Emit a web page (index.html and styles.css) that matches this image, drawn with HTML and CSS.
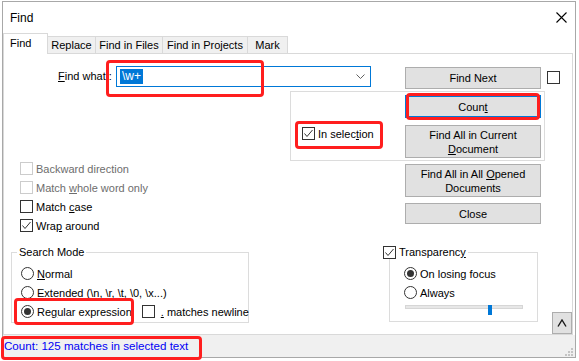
FILE: index.html
```html
<!DOCTYPE html>
<html lang="en">
<head>
  <meta charset="UTF-8" />
  <meta name="viewport" content="width=device-width, initial-scale=1.0"/>
  <title>Find</title>
  <link rel="stylesheet" href="styles.css">
</head>
<body>
  <div class="window">
    <div class="titlebar">
      <span class="title">Find</span>
      <svg class="close-x" width="11" height="11" viewBox="0 0 11 11">
        <path d="M0.5 0.5 L10.5 10.5 M10.5 0.5 L0.5 10.5" stroke="#000" stroke-width="1.1" fill="none"/>
      </svg>
    </div>

    <div class="tabs">
      <div class="tab active">Find</div>
      <div class="tab tab-replace">Replace</div>
      <div class="tab tab-files">Find in Files</div>
      <div class="tab tab-projects">Find in Projects</div>
      <div class="tab tab-mark">Mark</div>
    </div>

    <div class="panel">
      <div class="find-row">
        <label class="find-label"><u>F</u>ind what :</label>
        <div class="combo">
          <span class="sel">\w+</span>
          <svg width="9" height="5" viewBox="0 0 9 5">
            <polyline points="0.5,0.5 4.5,4.5 8.5,0.5" stroke="#606060" stroke-width="1" fill="none"/>
          </svg>
        </div>
        <div class="btn find-next"><span>Find Next</span></div>
        <span class="cb extra-check"></span>
      </div>

      <div class="mid">
        <div class="options">
          <div class="check-row disabled"><span class="cb"></span><span>Backward direction</span></div>
          <div class="check-row disabled"><span class="cb"></span><span>Match <u>w</u>hole word only</span></div>
          <div class="check-row"><span class="cb"></span><span>Match <u>c</u>ase</span></div>
          <div class="check-row"><span class="cb checked"><svg width="11" height="11" viewBox="0 0 11 11"><polyline points="1.5,5.5 4,8.5 9.5,2" stroke="#333" stroke-width="1" fill="none"/></svg></span><span>Wra<u>p</u> around</span></div>
        </div>

        <div class="actions">
          <div class="selbox">
            <div class="sel-check">
              <div class="check-row"><span class="cb checked"><svg width="11" height="11" viewBox="0 0 11 11"><polyline points="1.5,5.5 4,8.5 9.5,2" stroke="#333" stroke-width="1" fill="none"/></svg></span><span>In selec<u>t</u>ion</span></div>
            </div>
            <div class="sel-buttons">
              <div class="btn count"><span>Coun<u>t</u></span></div>
              <div class="btn tall"><span>Find All in Current<br><u>D</u>ocument</span></div>
            </div>
          </div>
          <div class="btn tall find-opened"><span>Find All in All <u>O</u>pened<br>Documents</span></div>
          <div class="btn close-btn"><span>Close</span></div>
        </div>
      </div>

      <div class="bottom">
        <fieldset class="group mode">
          <legend>Search Mode</legend>
          <div class="group-body">
            <div class="radio-row"><span class="rb"></span><span><u>N</u>ormal</span></div>
            <div class="radio-row"><span class="rb"></span><span>E<u>x</u>tended (\n, \r, \t, \0, \x...)</span></div>
            <div class="radio-row"><span class="rb on"></span><span>Re<u>g</u>ular expression</span><span class="cb newline-check"></span><span><u>.</u>&nbsp;matches newline</span></div>
          </div>
        </fieldset>

        <fieldset class="group transp">
          <legend><span class="cb checked"><svg width="11" height="11" viewBox="0 0 11 11"><polyline points="1.5,5.5 4,8.5 9.5,2" stroke="#333" stroke-width="1" fill="none"/></svg></span><span>Transparenc<u>y</u></span></legend>
          <div class="group-body">
            <div class="radio-row"><span class="rb on"></span><span>On losing focus</span></div>
            <div class="radio-row"><span class="rb"></span><span>Always</span></div>
            <div class="slider">
              <div class="track"></div>
              <div class="thumb"></div>
            </div>
          </div>
        </fieldset>

        <div class="btn collapse">
          <svg width="10" height="8" viewBox="0 0 10 8">
            <polyline points="1,7.5 5,1 9,7.5" stroke="#1a1a1a" stroke-width="1.4" fill="none"/>
          </svg>
        </div>
      </div>
    </div>

    <div class="status">
      <span class="status-text">Count: 125 matches in selected text</span>
      <svg class="grip" width="9" height="9" viewBox="0 0 9 9">
        <rect x="6" y="0" width="2" height="2" fill="#c4c4c4"/>
        <rect x="3" y="3" width="2" height="2" fill="#c4c4c4"/>
        <rect x="6" y="3" width="2" height="2" fill="#c4c4c4"/>
        <rect x="0" y="6" width="2" height="2" fill="#c4c4c4"/>
        <rect x="3" y="6" width="2" height="2" fill="#c4c4c4"/>
        <rect x="6" y="6" width="2" height="2" fill="#c4c4c4"/>
      </svg>
    </div>
  </div>

  <!-- red annotation boxes drawn over the dialog -->
  <div class="mark mark-combo"></div>
  <div class="mark mark-count"></div>
  <div class="mark mark-selection"></div>
  <div class="mark mark-regex"></div>
  <div class="mark mark-status"></div>
</body>
</html>
```

FILE: styles.css
```css
* {
  box-sizing: border-box;
}

body {
  margin: 0;
  width: 579px;
  height: 361px;
  overflow: hidden;
  position: relative;
  font-family: "Liberation Sans", Arial, sans-serif;
  font-size: 11px;
  color: #000;
  background: #fff;
}

u {
  text-decoration: underline;
  text-underline-offset: 1px;
}

.window {
  margin: 1px 0 0 2px;
  width: 574px;
  height: 357px;
  border: 1px solid #a8a8a8;
  background: #fff;
  display: flex;
  flex-direction: column;
}

.titlebar {
  height: 31px;
  display: flex;
  align-items: center;
  justify-content: space-between;
  padding: 0 8px 0 7px;
}

.title {
  font-size: 12px;
}

/* tabs */
.tabs {
  height: 20px;
  display: flex;
  align-items: flex-end;
}

.tab {
  height: 17px;
  border: 1px solid #d9d9d9;
  border-bottom: none;
  border-left: none;
  background: #f0f0f0;
  text-align: center;
  line-height: 16px;
}

.tab.active {
  position: relative;
  width: 45px;
  height: 21px;
  margin-bottom: -1px;
  border-left: 1px solid #d9d9d9;
  background: #fff;
  text-align: left;
  padding-left: 6px;
  line-height: 19px;
}

.tab-replace { width: 48px; }
.tab-files { width: 67px; }
.tab-projects { width: 85px; }
.tab-mark { width: 40px; }

.panel {
  width: 570px;
  height: 282px;
  border: 1px solid #d9d9d9;
}

/* common controls */
.btn {
  width: 136px;
  background: #e1e1e1;
  border: 1px solid #adadad;
  display: flex;
  align-items: center;
  justify-content: center;
  text-align: center;
  line-height: 14px;
}

.cb {
  width: 13px;
  height: 13px;
  border: 1px solid #333;
  background: #fff;
  flex-shrink: 0;
  display: flex;
  align-items: center;
  justify-content: center;
}

.rb {
  width: 13px;
  height: 13px;
  border: 1px solid #333;
  border-radius: 50%;
  background: #fff;
  flex-shrink: 0;
  display: flex;
  align-items: center;
  justify-content: center;
  margin-right: 3px;
}

.rb.on::after {
  content: "";
  width: 7px;
  height: 7px;
  border-radius: 50%;
  background: #333;
}

.check-row {
  height: 13px;
  display: flex;
  align-items: center;
  gap: 3px;
  white-space: nowrap;
}

.check-row.disabled {
  color: #6d6d6d;
}

.check-row.disabled .cb {
  border-color: #cccccc;
}

/* find row */
.find-row {
  margin-top: 12px;
  height: 22px;
  display: flex;
  align-items: flex-start;
}

.find-label {
  margin-left: 54px;
  width: 58px;
  line-height: 21px;
}

.combo {
  width: 255px;
  height: 21px;
  border: 1px solid #0078d7;
  display: flex;
  align-items: center;
  justify-content: space-between;
  padding: 0 5px 0 3px;
}

.combo .sel {
  background: #0078d7;
  color: #fff;
  padding: 0 2px;
  line-height: 15px;
  font-size: 12px;
}

.find-next {
  margin-left: 34px;
  margin-top: 1px;
  height: 22px;
}

.extra-check {
  margin-left: 6px;
  margin-top: 5px;
}

/* middle area */
.mid {
  margin-top: 3px;
  display: flex;
}

.options {
  width: 286px;
  padding: 71px 0 0 16px;
  display: flex;
  flex-direction: column;
  gap: 6px;
}

.actions {
  display: flex;
  flex-direction: column;
}

.selbox {
  width: 255px;
  height: 70px;
  border: 1px solid #dcdcdc;
  display: flex;
}

.sel-check {
  width: 114px;
  padding: 35px 0 0 11px;
}

.sel-buttons {
  padding-top: 3px;
  display: flex;
  flex-direction: column;
  gap: 7px;
}

.count {
  height: 23px;
  border: 2px solid #0078d7;
}

.tall {
  height: 33px;
}

.find-opened {
  margin: 3px 0 0 115px;
}

.close-btn {
  margin: 6px 0 0 115px;
  height: 21px;
}

/* bottom groups */
.bottom {
  margin-top: 13px;
  display: flex;
  align-items: flex-start;
}

.group {
  margin: 0;
  padding: 0 0 1px 0;
  border: 1px solid #dcdcdc;
  min-width: 0;
}

.group legend {
  padding: 0 2px;
  line-height: 14px;
  height: 14px;
}

.group-body {
  padding-top: 5px;
}

.radio-row {
  height: 19px;
  display: flex;
  align-items: center;
  white-space: nowrap;
}

.mode {
  margin-left: 7px;
  width: 238px;
}

.mode legend {
  margin-left: 5px;
}

.mode .group-body {
  padding-left: 9px;
}

.newline-check {
  margin: 0 6px 0 10px;
}

.transp {
  margin-left: 140px;
  width: 149px;
  padding-bottom: 6px;
}

.transp legend {
  margin-left: -7px;
  padding: 0 2px 0 0;
  display: flex;
  align-items: center;
  gap: 3px;
}

.transp .group-body {
  padding-left: 14px;
}

.slider {
  position: relative;
  margin: 3px 0 0 1px;
  width: 118px;
  height: 10px;
}

.track {
  margin-top: 2px;
  height: 4px;
  background: #e7e7e7;
  border: 1px solid #d6d6d6;
}

.thumb {
  position: absolute;
  left: 83px;
  top: 0;
  width: 4px;
  height: 10px;
  background: #0078d7;
}

.collapse {
  margin: 67px 0 0 14px;
  width: 20px;
  height: 22px;
}

/* status bar */
.status {
  flex: 1;
  background: #f0f0f0;
  display: flex;
  padding-left: 1px;
}

.status-text {
  color: #0000f5;
  font-size: 11.6px;
  line-height: 22px;
}

.grip {
  margin: auto 1px 0 auto;
}

/* red annotation boxes */
.mark {
  position: absolute;
  border: 3px solid #ff1e1e;
  border-radius: 4px;
}

.mark-combo { left: 106px; top: 60px; width: 158px; height: 37px; }
.mark-count { left: 406px; top: 93px; width: 134px; height: 27px; }
.mark-selection { left: 295px; top: 121px; width: 88px; height: 28px; }
.mark-regex { left: 14px; top: 298px; width: 120px; height: 27px; }
.mark-status { left: 1px; top: 336px; width: 201px; height: 24px; }
```
